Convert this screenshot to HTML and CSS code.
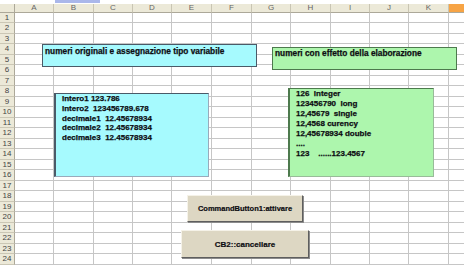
FILE: index.html
```html
<!DOCTYPE html>
<html lang="it">
<head>
    <meta charset="UTF-8">
    <meta name="viewport" content="width=device-width, initial-scale=1.0">
    <title>Foglio1</title>
    <link rel="stylesheet" href="styles.css">
</head>
<body>
    <div class="page">
        <div class="tab-strip"></div>
        <div class="sheet" id="sheet"></div>

        <div class="shape shape-cyan title-orig">numeri originali e assegnazione tipo variabile</div>
        <div class="shape shape-green title-res">numeri con effetto della elaborazione</div>

        <div class="shape shape-cyan box box-orig">intero1 123.786
intero2  123456789.678
decimale1  12.45678934
decimale2  12.45678934
decimale3  12.45678934</div>

        <div class="shape shape-green box box-res">126  integer
123456790  long
12,45679  single
12,4568 curency
12,45678934 double
....
123    ......123.4567</div>

        <button class="cmd-btn btn-attivare">CommandButton1:attivare</button>
        <button class="cmd-btn btn-cancellare">CB2::cancellare</button>
    </div>

    <script>
        const cols = ['A', 'B', 'C', 'D', 'E', 'F', 'G', 'H', 'I', 'J', 'K'];
        const sheet = document.getElementById('sheet');

        function addCell(cls, text) {
            const d = document.createElement('div');
            d.className = cls;
            if (text !== undefined) d.textContent = text;
            sheet.appendChild(d);
        }

        // header row
        addCell('corner');
        cols.forEach(c => addCell('col-head', c));
        addCell('col-head col-sel');

        // 24 rows, last column is only partly visible
        for (let r = 1; r <= 24; r++) {
            addCell('row-head', r);
            cols.forEach(() => addCell('cell'));
            addCell('cell cell-last');
        }
    </script>
</body>
</html>
```

FILE: styles.css
```css
* {
    margin: 0;
    padding: 0;
    box-sizing: border-box;
}

body {
    background: #fff;
    font-family: 'Liberation Sans', Arial, sans-serif;
}

.page {
    position: relative;
    width: 474px;
    height: 274px;
    overflow: hidden;
}

.tab-strip {
    margin-left: 55px;
    width: 45px;
    height: 3px;
    background: #aab7ea;
}

.sheet {
    margin-top: 1px;
    display: grid;
    grid-template-columns: 15px 39px 40px 39px 39px 40px 40px 39px 40px 39px 39px 40px 15px;
    grid-template-rows: 9px repeat(12, 10px 11px);
    width: 464px;
}

.corner {
    background: #ece9d8;
    border-right: 1px solid #aca899;
    border-bottom: 1px solid #aca899;
}

.col-head {
    background: #ece9d8;
    border-right: 1px solid #c9c5b3;
    border-bottom: 1px solid #aca899;
    color: #666;
    font-size: 8px;
    line-height: 8px;
    text-align: center;
}

.col-sel {
    background: #f7a445;
    border-right: none;
}

.row-head {
    background: #ece9d8;
    border-right: 1px solid #aca899;
    border-bottom: 1px solid #cbc7b5;
    color: #444;
    font-size: 8px;
    line-height: 10px;
    text-align: center;
}

.cell {
    border-right: 1px solid #c6c6c6;
    border-bottom: 1px solid #c6c6c6;
}

.cell-last {
    border-right: none;
}

/* floating text boxes */
.shape {
    position: absolute;
    color: #0d0d12;
    font-weight: bold;
    font-size: 8px;
    white-space: pre;
    -webkit-text-stroke: 0.25px #0d0d12;
}

.shape-cyan {
    background: #a6fafe;
    border: 1px solid #4a5a68;
}

.shape-green {
    background: #adf6ad;
    border: 1px solid #4d7a4d;
}

.title-orig {
    left: 42px;
    top: 44px;
    width: 215px;
    height: 23px;
    padding: 1px 2px;
    font-size: 8.3px;
    line-height: 10px;
}

.title-res {
    left: 272px;
    top: 47px;
    width: 185px;
    height: 23px;
    padding: 0 2px;
    font-size: 8.3px;
    line-height: 10px;
}

.box {
    border-left-width: 2px;
    border-right-color: #9ab;
    border-bottom-color: #9ab;
    padding-left: 6px;
}

.box-orig {
    left: 54px;
    top: 93px;
    width: 155px;
    height: 84px;
    line-height: 9.8px;
}

.box-res {
    left: 288px;
    top: 88px;
    width: 146px;
    height: 89px;
    line-height: 10px;
    border-right-color: #9b9;
    border-bottom-color: #9b9;
}

/* command buttons */
.cmd-btn {
    position: absolute;
    background: #ddd7c3;
    border: 1px solid;
    border-color: #f5f2e8 #5e5e5e #5e5e5e #f5f2e8;
    box-shadow: 1px 1px 0 #8c8c8c;
    color: #0d0d12;
    font-family: 'Liberation Sans', Arial, sans-serif;
    font-weight: bold;
    text-align: center;
    -webkit-text-stroke: 0.2px #0d0d12;
}

.btn-attivare {
    left: 187px;
    top: 195px;
    width: 116px;
    height: 27px;
    font-size: 7.5px;
}

.btn-cancellare {
    left: 181px;
    top: 230px;
    width: 128px;
    height: 28px;
    font-size: 8px;
}
```
